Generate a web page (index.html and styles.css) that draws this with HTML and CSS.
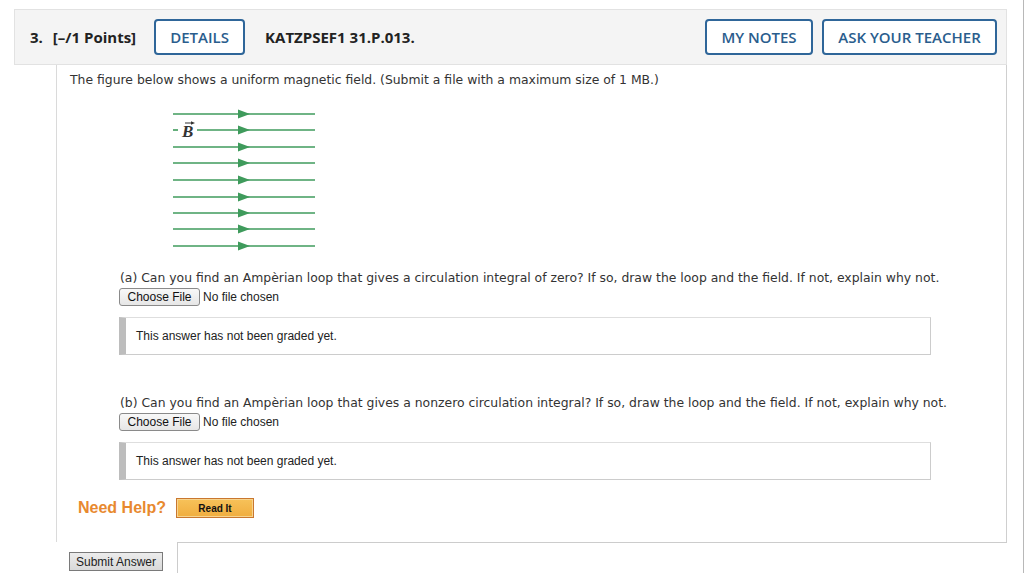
FILE: index.html
```html
<!DOCTYPE html>
<html>
<head>
<meta charset="utf-8">
<link rel="stylesheet" href="styles.css">
</head>
<body>
<div class="page">
  <div class="question">
    <div class="qhead">
      <span class="qnum">3.</span>
      <span class="qpoints">[–/1 Points]</span>
      <button class="hbtn details">DETAILS</button>
      <span class="qcode">KATZPSEF1 31.P.013.</span>
      <div class="hright">
        <button class="hbtn">MY NOTES</button>
        <button class="hbtn">ASK YOUR TEACHER</button>
      </div>
    </div>
    <div class="qbody">
      <p class="intro">The figure below shows a uniform magnetic field. (Submit a file with a maximum size of 1 MB.)</p>
      <svg class="figure" width="150" height="150" viewBox="0 0 150 150">
        <g stroke="#3f9b5c" stroke-width="1.6" fill="none">
          <line x1="3" y1="9" x2="145" y2="9"/>
          <line x1="3" y1="25" x2="8" y2="25"/>
          <line x1="27" y1="25" x2="145" y2="25"/>
          <line x1="3" y1="42" x2="145" y2="42"/>
          <line x1="3" y1="58" x2="145" y2="58"/>
          <line x1="3" y1="75" x2="145" y2="75"/>
          <line x1="3" y1="92" x2="145" y2="92"/>
          <line x1="3" y1="108" x2="145" y2="108"/>
          <line x1="3" y1="124" x2="145" y2="124"/>
          <line x1="3" y1="141" x2="145" y2="141"/>
        </g>
        <g fill="#3f9b5c">
          <polygon points="68,4.5 80,9 68,13.5"/>
          <polygon points="68,20.5 80,25 68,29.5"/>
          <polygon points="68,37.5 80,42 68,46.5"/>
          <polygon points="68,53.5 80,58 68,62.5"/>
          <polygon points="68,70.5 80,75 68,79.5"/>
          <polygon points="68,87.5 80,92 68,96.5"/>
          <polygon points="68,103.5 80,108 68,112.5"/>
          <polygon points="68,119.5 80,124 68,128.5"/>
          <polygon points="68,136.5 80,141 68,145.5"/>
        </g>
        <g stroke="#333" stroke-width="1" fill="#333">
          <line x1="15" y1="18" x2="23" y2="18"/>
          <polygon points="21,16.2 25,18 21,19.8" stroke="none"/>
        </g>
        <text x="12" y="32" class="blabel">B</text>
      </svg>
      <div class="part">
        <p class="ptext">(a) Can you find an Ampèrian loop that gives a circulation integral of zero? If so, draw the loop and the field. If not, explain why not.</p>
        <div class="filerow"><button class="choose">Choose File</button><span class="nofile">No file chosen</span></div>
        <div class="graded">This answer has not been graded yet.</div>
      </div>
      <div class="part partb">
        <p class="ptext">(b) Can you find an Ampèrian loop that gives a nonzero circulation integral? If so, draw the loop and the field. If not, explain why not.</p>
        <div class="filerow"><button class="choose">Choose File</button><span class="nofile">No file chosen</span></div>
        <div class="graded">This answer has not been graded yet.</div>
      </div>
      <div class="help">
        <span class="needhelp">Need Help?</span>
        <button class="readit">Read It</button>
      </div>
    </div>
    <div class="qfoot">
      <button class="submit">Submit Answer</button>
      <div class="history"></div>
    </div>
  </div>
</div>
</body>
</html>
```
FILE: styles.css
```css
html, body {
  margin: 0;
  padding: 0;
  background: #fff;
}
body {
  width: 1023px;
  height: 573px;
  border-right: 1px solid #b8b8b8;
  overflow: hidden;
}
.page {
  padding-top: 9px;
}
.question {
  margin-left: 14px;
  width: 993px;
}
.qhead {
  box-sizing: border-box;
  height: 56px;
  background: #f4f4f4;
  border: 1px solid #e2e2e2;
  display: flex;
  align-items: center;
  padding: 0 9px 0 15px;
  font-family: "Open Sans", "DejaVu Sans", sans-serif;
  font-weight: 700;
  font-size: 15px;
  color: #222;
}
.qnum {
  margin-right: 10px;
}
.qpoints {
  margin-right: 18px;
}
.qcode {
  margin-left: 20px;
}
.hbtn {
  box-sizing: border-box;
  height: 36px;
  border: 2px solid #2f6699;
  border-radius: 4px;
  background: #fff;
  color: #2a5d8d;
  font-family: "Open Sans", "DejaVu Sans", sans-serif;
  font-weight: 600;
  font-size: 15px;
  padding: 0 14px;
}
.details {
  width: 91px;
  padding: 0;
}
.hright {
  margin-left: auto;
  display: flex;
  gap: 9px;
}
.hright .hbtn:first-child { width: 108px; padding: 0; }
.hright .hbtn:last-child { width: 175px; padding: 0; }

.qbody {
  margin-left: 42px;
  border-left: 1px solid #dadada;
  border-right: 1px solid #cfcfcf;
  padding: 7px 0 24px 13px;
  font-family: "DejaVu Sans", Verdana, sans-serif;
  font-size: 12.4px;
  color: #333;
}
.intro {
  margin: 0;
  line-height: 16px;
}
.figure {
  display: block;
  margin: 17px 0 0 100px;
}
.blabel {
  font-family: "Liberation Serif", serif;
  font-style: italic;
  font-weight: 700;
  font-size: 17px;
  fill: #333;
}
.part {
  margin-left: 49px;
  margin-top: 15px;
}
.partb {
  margin-top: 40px;
}
.ptext {
  margin: 0 0 0 1px;
  line-height: 16px;
  white-space: nowrap;
}
.filerow {
  margin-top: 2px;
  display: flex;
  align-items: center;
  height: 18px;
  font-family: "Liberation Sans", Arial, sans-serif;
  font-size: 12px;
  color: #222;
}
.choose {
  box-sizing: border-box;
  width: 81px;
  height: 18px;
  padding: 0;
  border: 1px solid #8a8a8a;
  border-radius: 3px;
  background: linear-gradient(#f8f8f8, #e6e6e6);
  font-family: "Liberation Sans", Arial, sans-serif;
  font-size: 12px;
  color: #111;
}
.nofile {
  margin-left: 3px;
}
.graded {
  box-sizing: border-box;
  margin-top: 11px;
  width: 812px;
  height: 38px;
  border: 1px solid #cccccc;
  border-top-color: #dedede;
  border-left: 7px solid #bdbdbd;
  padding-left: 10px;
  display: flex;
  align-items: center;
  font-family: "Liberation Sans", Arial, sans-serif;
  font-size: 12px;
  color: #222;
}
.help {
  margin: 18px 0 0 8px;
  display: flex;
  align-items: center;
  height: 20px;
}
.needhelp {
  font-family: "Liberation Sans", Arial, sans-serif;
  font-weight: 700;
  font-size: 16px;
  color: #e8892f;
}
.readit {
  box-sizing: border-box;
  margin-left: 10px;
  width: 78px;
  height: 20px;
  padding: 0;
  border: 1px solid #c9772f;
  box-shadow: inset 0 0 0 1px #f7d48e;
  background: linear-gradient(#f7c25a, #f0ad3f);
  font-family: "Liberation Sans", Arial, sans-serif;
  font-weight: 700;
  font-size: 10px;
  color: #111;
}
.qfoot {
  display: flex;
  align-items: flex-start;
}
.submit {
  box-sizing: border-box;
  margin: 10px 0 0 55px;
  width: 94px;
  height: 19px;
  padding: 0;
  border: 1px solid #7a7a7a;
  background: linear-gradient(#ececec, #d9d9d9);
  font-family: "Liberation Sans", Arial, sans-serif;
  font-size: 12px;
  color: #222;
}
.history {
  flex: 1;
  margin-left: 14px;
  height: 40px;
  border-top: 1px solid #cccccc;
  border-left: 1px solid #cccccc;
}
```
